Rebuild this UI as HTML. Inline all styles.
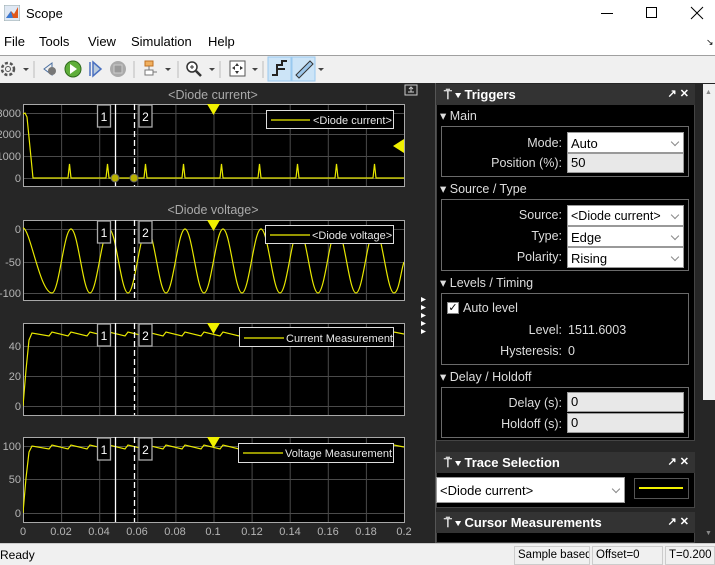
<!DOCTYPE html>
<html><head><meta charset="utf-8"><style>
*{margin:0;padding:0;box-sizing:border-box}
html,body{width:715px;height:565px;overflow:hidden}
body{background:#262626;font-family:"Liberation Sans",sans-serif;position:relative;white-space:nowrap}
.a{position:absolute}
.t{font-size:13px;color:#000}
.inp{position:absolute;background:#fff;color:#000;font-size:13px;padding:3px 0 0 3px;height:21px;border:1px solid #999;overflow:hidden}
.ro{background:#e8e8e8}
.chev{position:absolute;right:5px;top:6px;width:6px;height:6px;border-right:1px solid #888;border-bottom:1px solid #888;transform:rotate(45deg)}
.hdr{position:absolute;left:436px;width:259px;height:21px;background:#333;color:#fff;font-weight:bold;font-size:13px;padding:3px 0 0 8px}
.sec{position:absolute;left:440px;color:#ddd;font-size:12.5px}
.box{position:absolute;left:441px;width:248px;border:1px solid #6a6a6a}
.lbl{position:absolute;color:#ddd;font-size:12.5px;text-align:right}
.sb{position:absolute;top:546px;height:19px;border:1px solid #ccc;font-size:11.5px;padding:2px 3px;overflow:hidden}
</style></head><body>
<div class="a" style="left:0;top:0;width:715px;height:55px;background:#fff"></div>
<svg class="a" style="left:4px;top:5px" width="16" height="16"><rect x="0" y="0" width="16" height="16" fill="#dfe8f4" stroke="#9aa"/><path d="M2 13 L7 6 L10 9 L14 2 L14 13Z" fill="#e0561a"/><path d="M2 13 L7 6 L9 13Z" fill="#3a7bd5"/></svg>
<div class="a t" style="left:26px;top:6px;font-size:13px">Scope</div>
<div class="a" style="left:601px;top:13px;width:12px;height:1px;background:#000"></div>
<div class="a" style="left:646px;top:7px;width:11px;height:11px;border:1px solid #000"></div>
<svg class="a" style="left:690px;top:6px" width="14" height="14"><path d="M1 1L13 13M13 1L1 13" stroke="#000"/></svg>
<div class="a t" style="left:4px;top:34px">File</div>
<div class="a t" style="left:39px;top:34px">Tools</div>
<div class="a t" style="left:88px;top:34px">View</div>
<div class="a t" style="left:131px;top:34px">Simulation</div>
<div class="a t" style="left:208px;top:34px">Help</div>
<div class="a" style="left:706px;top:37px;font-size:9px">↘</div>
<div class="a" style="left:0;top:55px;width:715px;height:1px;background:#a0a0a0"></div>
<div class="a" style="left:0;top:56px;width:715px;height:27px;background:#f0f0f0"></div>
<svg class="a" style="left:0;top:56px" width="340" height="27">
<circle cx="8" cy="13" r="6" fill="none" stroke="#555" stroke-width="2.5" stroke-dasharray="3 2"/><circle cx="8" cy="13" r="2.5" fill="none" stroke="#555"/>
<path d="M23 12 l3 3 l3-3z" fill="#444"/>
<line x1="34" y1="5" x2="34" y2="22" stroke="#bbb"/>
<path d="M44 13 l8-6 v12z" fill="none" stroke="#4a6fa0"/><circle cx="52" cy="15" r="4" fill="#777"/>
<circle cx="73" cy="13" r="8" fill="#5fae3a" stroke="#2e6a1c"/><path d="M70 8 l7 5 l-7 5z" fill="#fff"/>
<path d="M90 6 v14 M93 6 l8 7 l-8 7z" stroke="#4a70c0" fill="#bcd" stroke-width="1.5"/>
<circle cx="118" cy="13" r="8" fill="#aaa"/><rect x="114" y="9" width="8" height="8" fill="#999" stroke="#ccc"/>
<line x1="134" y1="5" x2="134" y2="22" stroke="#bbb"/>
<rect x="145" y="5" width="8" height="5" fill="#f0b060" stroke="#c07020"/><rect x="145" y="14" width="8" height="5" fill="#fff" stroke="#777"/><path d="M149 10v4 M153 16h4" stroke="#777"/>
<path d="M165 12 l3 3 l3-3z" fill="#444"/>
<line x1="178" y1="5" x2="178" y2="22" stroke="#bbb"/>
<circle cx="192" cy="11" r="5" fill="#fff" stroke="#333" stroke-width="1.5"/><path d="M196 15 l5 5" stroke="#333" stroke-width="2.5"/><path d="M190 11h4M192 9v4" stroke="#333"/>
<path d="M209 12 l3 3 l3-3z" fill="#444"/>
<line x1="220" y1="5" x2="220" y2="22" stroke="#bbb"/>
<rect x="230" y="5" width="15" height="15" fill="#fff" stroke="#555"/><path d="M237 7l-2 3h4zM237 18l-2-3h4zM232 12l3-2v4zM243 12l-3-2v4z" fill="#333"/>
<path d="M252 12 l3 3 l3-3z" fill="#444"/>
<line x1="263" y1="5" x2="263" y2="22" stroke="#bbb"/>
<rect x="268" y="1" width="23" height="24" fill="#cce4f7" stroke="#99c9ef"/>
<path d="M272 19h5v-10h5v-4h5M277 13h8" stroke="#222" stroke-width="2" fill="none"/>
<rect x="292" y="1" width="23" height="24" fill="#cce4f7" stroke="#99c9ef"/>
<path d="M296 19l14-14l3 3l-14 14z" fill="#9cc6ea" stroke="#333"/>
<path d="M318 12 l3 3 l3-3z" fill="#444"/>
</svg>
<svg class="a" style="left:0;top:83px" width="436" height="460" viewBox="0 83 436 460" font-family="Liberation Sans" font-size="11" fill="#b4b4b4">
<defs>
<clipPath id="c1"><rect x="23" y="104" width="381" height="82"/></clipPath>
<clipPath id="c2"><rect x="23" y="220" width="381" height="80"/></clipPath>
<clipPath id="c3"><rect x="23" y="323" width="381" height="92"/></clipPath>
<clipPath id="c4"><rect x="23" y="437" width="381" height="85"/></clipPath>
<pattern id="g" x="23" y="0" width="38.1" height="600" patternUnits="userSpaceOnUse"><line x1="0.5" y1="0" x2="0.5" y2="600" stroke="#4a4a4a"/></pattern>
</defs>
<rect x="405" y="85" width="12" height="10" fill="#262626" stroke="#ccc"/><path d="M408 92h6M411 92v-4M409 89l2-2l2 2" stroke="#ccc" fill="none"/>
<text x="213" y="99" text-anchor="middle" font-size="12.5" fill="#aaa">&lt;Diode current&gt;</text>
<text x="213" y="214" text-anchor="middle" font-size="12.5" fill="#aaa">&lt;Diode voltage&gt;</text>
<g stroke="#a8a8a8" fill="#000"><rect x="23.5" y="104.5" width="381" height="82"/><rect x="23.5" y="220.5" width="381" height="80"/><rect x="23.5" y="323.5" width="381" height="92"/><rect x="23.5" y="437.5" width="381" height="85"/></g>
<g fill="url(#g)"><rect x="24" y="105" width="380" height="81"/><rect x="24" y="221" width="380" height="79"/><rect x="24" y="324" width="380" height="91"/><rect x="24" y="438" width="380" height="84"/></g>
<g stroke="#4a4a4a">
<path d="M24 113.5h380M24 134.5h380M24 156.5h380M24 178.5h380"/>
<path d="M24 229.5h380M24 262.5h380M24 293.5h380"/>
<path d="M24 346.5h380M24 376.5h380M24 406.5h380"/>
<path d="M24 446.5h380M24 479.5h380M24 513.5h380"/>
</g>
<g text-anchor="end">
<text x="21" y="117">3000</text><text x="21" y="138">2000</text><text x="21" y="160">1000</text><text x="21" y="182">0</text>
<text x="21" y="233">0</text><text x="21" y="266">-50</text><text x="21" y="297">-100</text>
<text x="21" y="350">40</text><text x="21" y="380">20</text><text x="21" y="410">0</text>
<text x="21" y="450">100</text><text x="21" y="483">50</text><text x="21" y="517">0</text>
</g>
<g text-anchor="middle"><text x="23" y="535">0</text><text x="61" y="535">0.02</text><text x="99" y="535">0.04</text><text x="137" y="535">0.06</text><text x="175" y="535">0.08</text><text x="213" y="535">0.1</text><text x="252" y="535">0.12</text><text x="290" y="535">0.14</text><text x="328" y="535">0.16</text><text x="366" y="535">0.18</text><text x="404" y="535">0.2</text></g>
<g fill="none" stroke="#e8e800" stroke-width="1.2">
<path clip-path="url(#c1)" d="M23 114 L25 113 L27 117 L33 178 H68 L69.5 164 L71 178 H106 L107.5 164 L109 178 H144 L145.5 164 L147 178 H182 L183.5 164 L185 178 H220 L221.5 164 L223 178 H258 L259.5 164 L261 178 H296 L297.5 164 L299 178 H335 L336.5 164 L338 178 H373 L374.5 164 L376 178 H404"/>
<path clip-path="url(#c2)" d="M23 228 C30 228 40 293 52 293 C59 293 64 229 71 229 C78 229 83 293 90 293 C97 293 102 229 109 229 C116 229 121 293 128 293 C135 293 140 229 147 229 C154 229 159 293 166 293 C173 293 178 229 185 229 C192 229 197 293 204 293 C211 293 216 229 223 229 C230 229 235 293 242 293 C249 293 254 229 261 229 C268 229 273 293 280 293 C287 293 292 229 299 229 C306 229 311 293 318 293 C325 293 330 229 337 229 C344 229 349 293 356 293 C363 293 368 229 375 229 C382 229 387 293 394 293 C399 293 401 270 404 262"/>
<path clip-path="url(#c3)" d="M23 406 L26 370 L29 340 L32 333 L49 336 L52 332 L68 336 L71 332 L87 336 L90 332 L106 336 L109 332 L125 336 L128 332 L144 336 L147 332 L163 336 L166 332 L182 336 L185 332 L201 336 L204 332 L220 336 L223 332 L239 336 L242 332 L258 336 L261 332 L277 336 L280 332 L296 336 L299 332 L315 336 L318 332 L334 336 L337 332 L353 336 L356 332 L372 336 L375 332 L391 336 L394 332 L404 334"/>
<path clip-path="url(#c4)" d="M23 513 L26 478 L29 452 L32 446 L49 449 L52 445 L68 449 L71 445 L87 449 L90 445 L106 449 L109 445 L125 449 L128 445 L144 449 L147 445 L163 449 L166 445 L182 449 L185 445 L201 449 L204 445 L220 449 L223 445 L239 449 L242 445 L258 449 L261 445 L277 449 L280 445 L296 449 L299 445 L315 449 L318 445 L334 449 L337 445 L353 449 L356 445 L372 449 L375 445 L391 449 L394 445 L404 447"/>
</g>
<g stroke="#fff" stroke-width="1.3">
<path d="M115.5 104v82M115.5 220v80M115.5 323v92M115.5 437v85"/>
<path d="M134.5 104v82M134.5 220v80M134.5 323v92M134.5 437v85" stroke-dasharray="6 3"/>
</g>
<g fill="#000" stroke="#aaa" stroke-width="1.3">
<rect x="97.5" y="105" width="13" height="22"/><rect x="139" y="105" width="13" height="22"/>
<rect x="97.5" y="221" width="13" height="22"/><rect x="139" y="221" width="13" height="22"/>
<rect x="97.5" y="324" width="13" height="22"/><rect x="139" y="324" width="13" height="22"/>
<rect x="97.5" y="438" width="13" height="22"/><rect x="139" y="438" width="13" height="22"/>
</g>
<g fill="#fff" text-anchor="middle" font-size="12"><text x="104" y="121">1</text><text x="145.5" y="121">2</text><text x="104" y="237">1</text><text x="145.5" y="237">2</text><text x="104" y="340">1</text><text x="145.5" y="340">2</text><text x="104" y="454">1</text><text x="145.5" y="454">2</text></g>
<circle cx="115" cy="178" r="4" fill="#b8b000" stroke="#666"/><circle cx="134" cy="178" r="4" fill="#b8b000" stroke="#666"/>
<g fill="#f0f000"><path d="M207 104h13l-6.5 11z"/><path d="M207 220h13l-6.5 11z"/><path d="M207 323h13l-6.5 11z"/><path d="M207 437h13l-6.5 11z"/><path d="M404 139v14l-11-7z"/></g>
<g fill="#000" stroke="#ddd"><rect x="266.5" y="110.5" width="127" height="18"/><rect x="265.5" y="225.5" width="128" height="18"/><rect x="239.5" y="327.5" width="154" height="19"/><rect x="238.5" y="443.5" width="155" height="19"/></g>
<g stroke="#f0f000" stroke-width="1.3"><path d="M271 120h39M270 235h40M244 338h40M243 453h40"/></g>
<g fill="#e8e8e8" font-size="11"><text x="313" y="124">&lt;Diode current&gt;</text><text x="312" y="239">&lt;Diode voltage&gt;</text><text x="286" y="342">Current Measurement</text><text x="285" y="457">Voltage Measurement</text></g>
<g fill="#fff"><path d="M421 297l5 2.5l-5 2.5z"/><path d="M421 305l5 2.5l-5 2.5z"/><path d="M421 313l5 2.5l-5 2.5z"/><path d="M421 321l5 2.5l-5 2.5z"/><path d="M421 329l5 2.5l-5 2.5z"/></g>
<line x1="435.5" y1="83" x2="435.5" y2="543" stroke="#555"/>
</svg>
<div class="a" style="left:436px;top:84px;width:259px;height:357px;background:#000;border:1px solid #444"></div>
<div class="hdr" style="top:84px">⍑ ▾ Triggers<span style="position:absolute;right:6px;font-size:11px">↗ ✕</span></div>
<div class="sec" style="top:108px">▾ Main</div>
<div class="box" style="top:126px;height:51px"></div>
<div class="lbl" style="left:450px;width:112px;top:136px">Mode:</div>
<div class="lbl" style="left:450px;width:112px;top:156px">Position (%):</div>
<div class="inp" style="left:567px;top:132px;width:117px">Auto<span class="chev"></span></div>
<div class="inp ro" style="left:567px;top:153px;width:117px;height:20px;padding-top:1px">50</div>
<div class="sec" style="top:181px">▾ Source / Type</div>
<div class="box" style="top:199px;height:72px"></div>
<div class="lbl" style="left:450px;width:112px;top:208px">Source:</div>
<div class="lbl" style="left:450px;width:112px;top:229px">Type:</div>
<div class="lbl" style="left:450px;width:112px;top:250px">Polarity:</div>
<div class="inp" style="left:567px;top:205px;width:117px;font-size:12.5px">&lt;Diode current&gt;<span class="chev"></span></div>
<div class="inp" style="left:567px;top:226px;width:117px">Edge<span class="chev"></span></div>
<div class="inp" style="left:567px;top:247px;width:117px">Rising<span class="chev"></span></div>
<div class="sec" style="top:275px">▾ Levels / Timing</div>
<div class="box" style="top:293px;height:72px"></div>
<div class="a" style="left:447px;top:302px;width:12px;height:12px;background:#fff;border:1px solid #888;font-size:11px;line-height:11px;text-align:center;color:#000">✓</div>
<div class="sec" style="left:463px;top:301px">Auto level</div>
<div class="lbl" style="left:450px;width:112px;top:323px">Level:</div>
<div class="sec" style="left:568px;top:323px">1511.6003</div>
<div class="lbl" style="left:450px;width:112px;top:344px">Hysteresis:</div>
<div class="sec" style="left:568px;top:344px">0</div>
<div class="sec" style="top:369px">▾ Delay / Holdoff</div>
<div class="box" style="top:387px;height:51px"></div>
<div class="lbl" style="left:450px;width:112px;top:396px">Delay (s):</div>
<div class="lbl" style="left:450px;width:112px;top:417px">Holdoff (s):</div>
<div class="inp ro" style="left:567px;top:392px;width:117px;height:20px;padding-top:1px">0</div>
<div class="inp ro" style="left:567px;top:413px;width:117px;height:20px;padding-top:1px">0</div>
<div class="a" style="left:436px;top:452px;width:259px;height:56px;background:#000;border:1px solid #444"></div>
<div class="hdr" style="top:452px">⍑ ▾ Trace Selection<span style="position:absolute;right:6px;font-size:11px">↗ ✕</span></div>
<div class="inp" style="left:436px;top:477px;width:189px;height:26px;padding-top:5px">&lt;Diode current&gt;<span class="chev" style="top:8px"></span></div>
<div class="a" style="left:634px;top:478px;width:55px;height:21px;border:1px solid #555;background:#000"></div>
<div class="a" style="left:639px;top:487px;width:44px;height:2px;background:#f0f000"></div>
<div class="a" style="left:436px;top:512px;width:259px;height:31px;background:#000;border:1px solid #444;overflow:hidden"></div>
<div class="hdr" style="top:512px">⍑ ▾ Cursor Measurements<span style="position:absolute;right:6px;font-size:11px">↗ ✕</span></div>
<div class="a" style="left:703px;top:84px;width:12px;height:316px;background:#f0f0f0"></div>
<div class="a" style="left:705px;top:89px;font-size:7px;color:#888">▲</div>
<div class="a" style="left:705px;top:530px;font-size:7px;color:#888">▼</div>
<div class="a" style="left:0;top:543px;width:715px;height:22px;background:#f0f0f0;border-top:1px solid #ccc"></div>
<div class="a t" style="left:0;top:548px;font-size:12px">Ready</div>
<div class="sb" style="left:514px;width:76px">Sample based</div>
<div class="sb" style="left:592px;width:71px">Offset=0</div>
<div class="sb" style="left:665px;width:50px">T=0.200</div>
</body></html>
